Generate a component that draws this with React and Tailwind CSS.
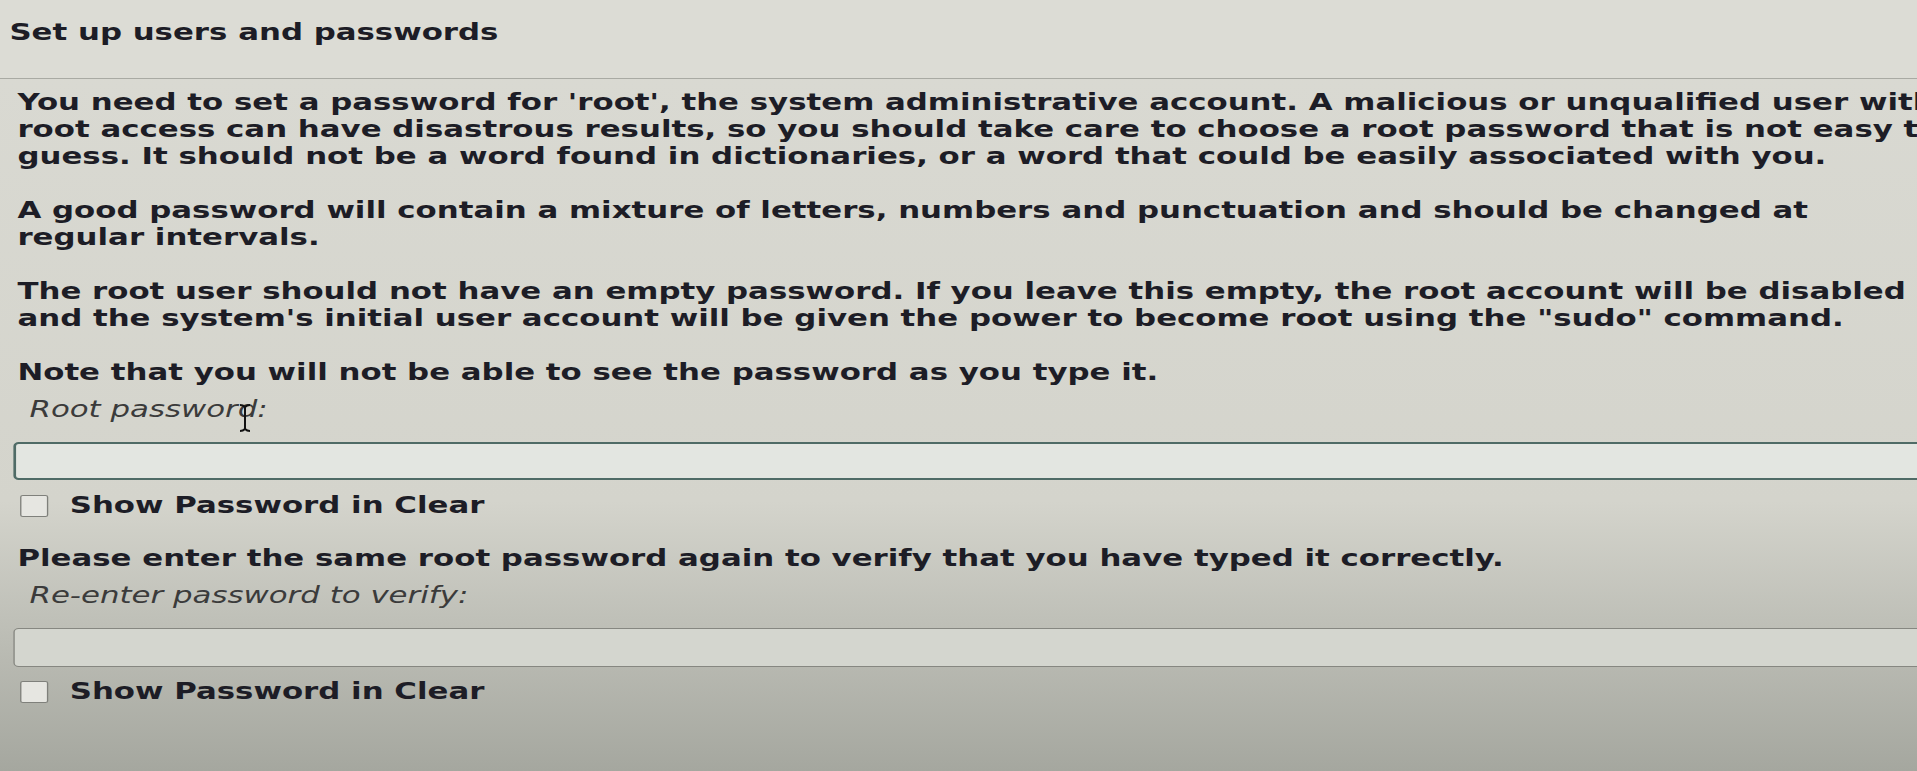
import React from 'react';

// the screen in the reference is stretched sideways, so the whole panel
// is laid out narrow and scaled on x
const intro = [
  "You need to set a password for 'root', the system administrative account. A malicious or unqualified user with",
  'root access can have disastrous results, so you should take care to choose a root password that is not easy to',
  'guess. It should not be a word found in dictionaries, or a word that could be easily associated with you.',
];

const goodPassword = [
  'A good password will contain a mixture of letters, numbers and punctuation and should be changed at',
  'regular intervals.',
];

const emptyPassword = [
  'The root user should not have an empty password. If you leave this empty, the root account will be disabled',
  'and the system\'s initial user account will be given the power to become root using the "sudo" command.',
];

const Paragraph = ({ lines, className = '' }) => (
  <div className={`pl-[3px] ${className}`}>
    {lines.map((line) => (
      <div key={line} className="whitespace-nowrap leading-[27px]">
        {line}
      </div>
    ))}
  </div>
);

const ShowInClear = ({ className = '' }) => (
  <label className={`flex h-[27px] items-center ${className}`}>
    <span className="ml-[5px] h-[22px] w-[21px] shrink-0 rounded-[2px] border-[1.5px] border-[#7f807b] bg-[#e6e6e1]" />
    <span className="ml-[16px] whitespace-nowrap leading-[27px]">Show Password in Clear</span>
  </label>
);

const Field = ({ label, focused, className = '' }) => (
  <div className={className}>
    <div className="whitespace-nowrap pl-[12px] italic font-normal leading-[27px] text-[#3b3b3b]">
      {label}
    </div>
    {focused ? (
      <div className="mt-[19px] h-[38px] w-[1460px] rounded-[4px] border-2 border-[#4f6b66] bg-[#e3e6e1]" />
    ) : (
      <div className="mt-[19px] h-[39px] w-[1460px] rounded-[4px] border-[1.5px] border-[#868781] bg-[#d4d6cf]" />
    )}
  </div>
);

const App = () => {
  return (
    <div className="relative h-[771px] w-full overflow-hidden bg-gradient-to-b from-[#dadad3] via-[#d4d4cc] via-65% to-[#a5a79f] font-['DejaVu_Sans',sans-serif] text-[23px] font-bold text-[#1d1d26]">
      <div className="w-[1431px] origin-top-left scale-x-[1.34]">
        {/* Header */}
        <div className="h-[79px] border-b border-[#a9aaa3] bg-[#dcdcd5] pl-[7px] pt-[19px]">
          <h1 className="whitespace-nowrap leading-[27px]">Set up users and passwords</h1>
        </div>

        {/* Body */}
        <div className="pl-[10px] pt-[10px]">
          <Paragraph lines={intro} />
          <Paragraph lines={goodPassword} className="mt-[27px]" />
          <Paragraph lines={emptyPassword} className="mt-[27px]" />
          <Paragraph
            lines={['Note that you will not be able to see the password as you type it.']}
            className="mt-[27px]"
          />

          <Field label="Root password:" focused className="mt-[10px]" />
          <ShowInClear className="mt-[12px]" />

          <Paragraph
            lines={['Please enter the same root password again to verify that you have typed it correctly.']}
            className="mt-[26px]"
          />
          <Field label="Re-enter password to verify:" className="mt-[10px]" />
          <ShowInClear className="mt-[11px]" />
        </div>
      </div>

      {/* mouse cursor */}
      <svg
        className="absolute left-[238px] top-[404px]"
        width="14"
        height="28"
        viewBox="0 0 14 28"
        fill="none"
        stroke="#111"
        strokeWidth="2"
      >
        <path d="M2 1c2 0 4 1 5 2c1-1 3-2 5-2M7 3v22M2 27c2 0 4-1 5-2c1 1 3 2 5 2" />
      </svg>
    </div>
  );
};

export default App;
